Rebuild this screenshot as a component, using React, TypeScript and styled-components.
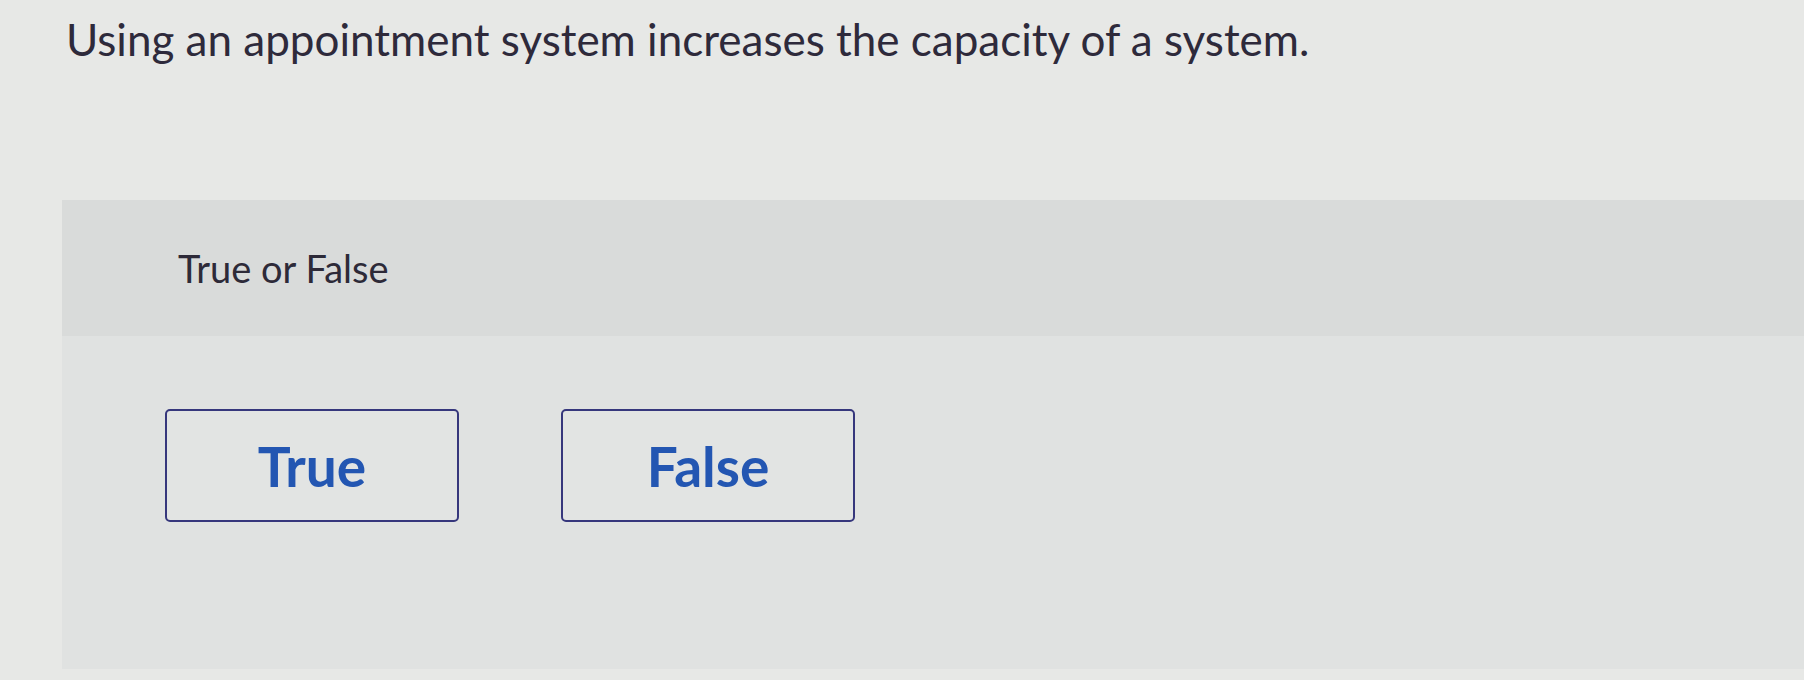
import styled, { createGlobalStyle } from 'styled-components';

const GlobalStyle = createGlobalStyle`
  html, body {
    margin: 0;
    padding: 0;
    background: #e7e8e6;
  }
  body {
    font-family: Lato, "Open Sans", "Liberation Sans", sans-serif;
    color: #2d2a38;
  }
`;

export default function App() {
  return (
    <>
      <GlobalStyle />
      <Page>
        <Question>
          Using an appointment system increases the capacity of a system.
        </Question>
        <Card>
          <Prompt>
            <PromptText>True or False</PromptText>
          </Prompt>
          <Choices>
            <Choice type="button">True</Choice>
            <Choice type="button">False</Choice>
          </Choices>
        </Card>
      </Page>
    </>
  );
}

const Page = styled.div`
  width: 1804px;
  height: 680px;
  box-sizing: border-box;
  padding: 10px 0 0 62px;
  overflow: hidden;
`;

const Question = styled.h1`
  margin: 0 0 0 4px;
  font-size: 44px;
  line-height: 58px;
  font-weight: 400;
  color: #2e2a3b;
`;

const Card = styled.div`
  margin-top: 132px;
  height: 469px;
  background: #e0e2e1;
  display: flex;
  flex-direction: column;
`;

const Prompt = styled.div`
  height: 136px;
  background: #d9dbda;
  display: flex;
  align-items: center;
  padding-left: 116px;
`;

const PromptText = styled.span`
  font-size: 38px;
  color: #2d2a38;
`;

const Choices = styled.div`
  display: flex;
  gap: 102px;
  padding: 73px 0 0 103px;
`;

const Choice = styled.button`
  width: 294px;
  height: 113px;
  box-sizing: border-box;
  border: 2px solid #36377c;
  border-radius: 5px;
  background: #e2e4e3;
  font-family: Lato, "Open Sans", "Liberation Sans", sans-serif;
  font-size: 55px;
  font-weight: 700;
  color: #2356b2;
  cursor: pointer;
`;
